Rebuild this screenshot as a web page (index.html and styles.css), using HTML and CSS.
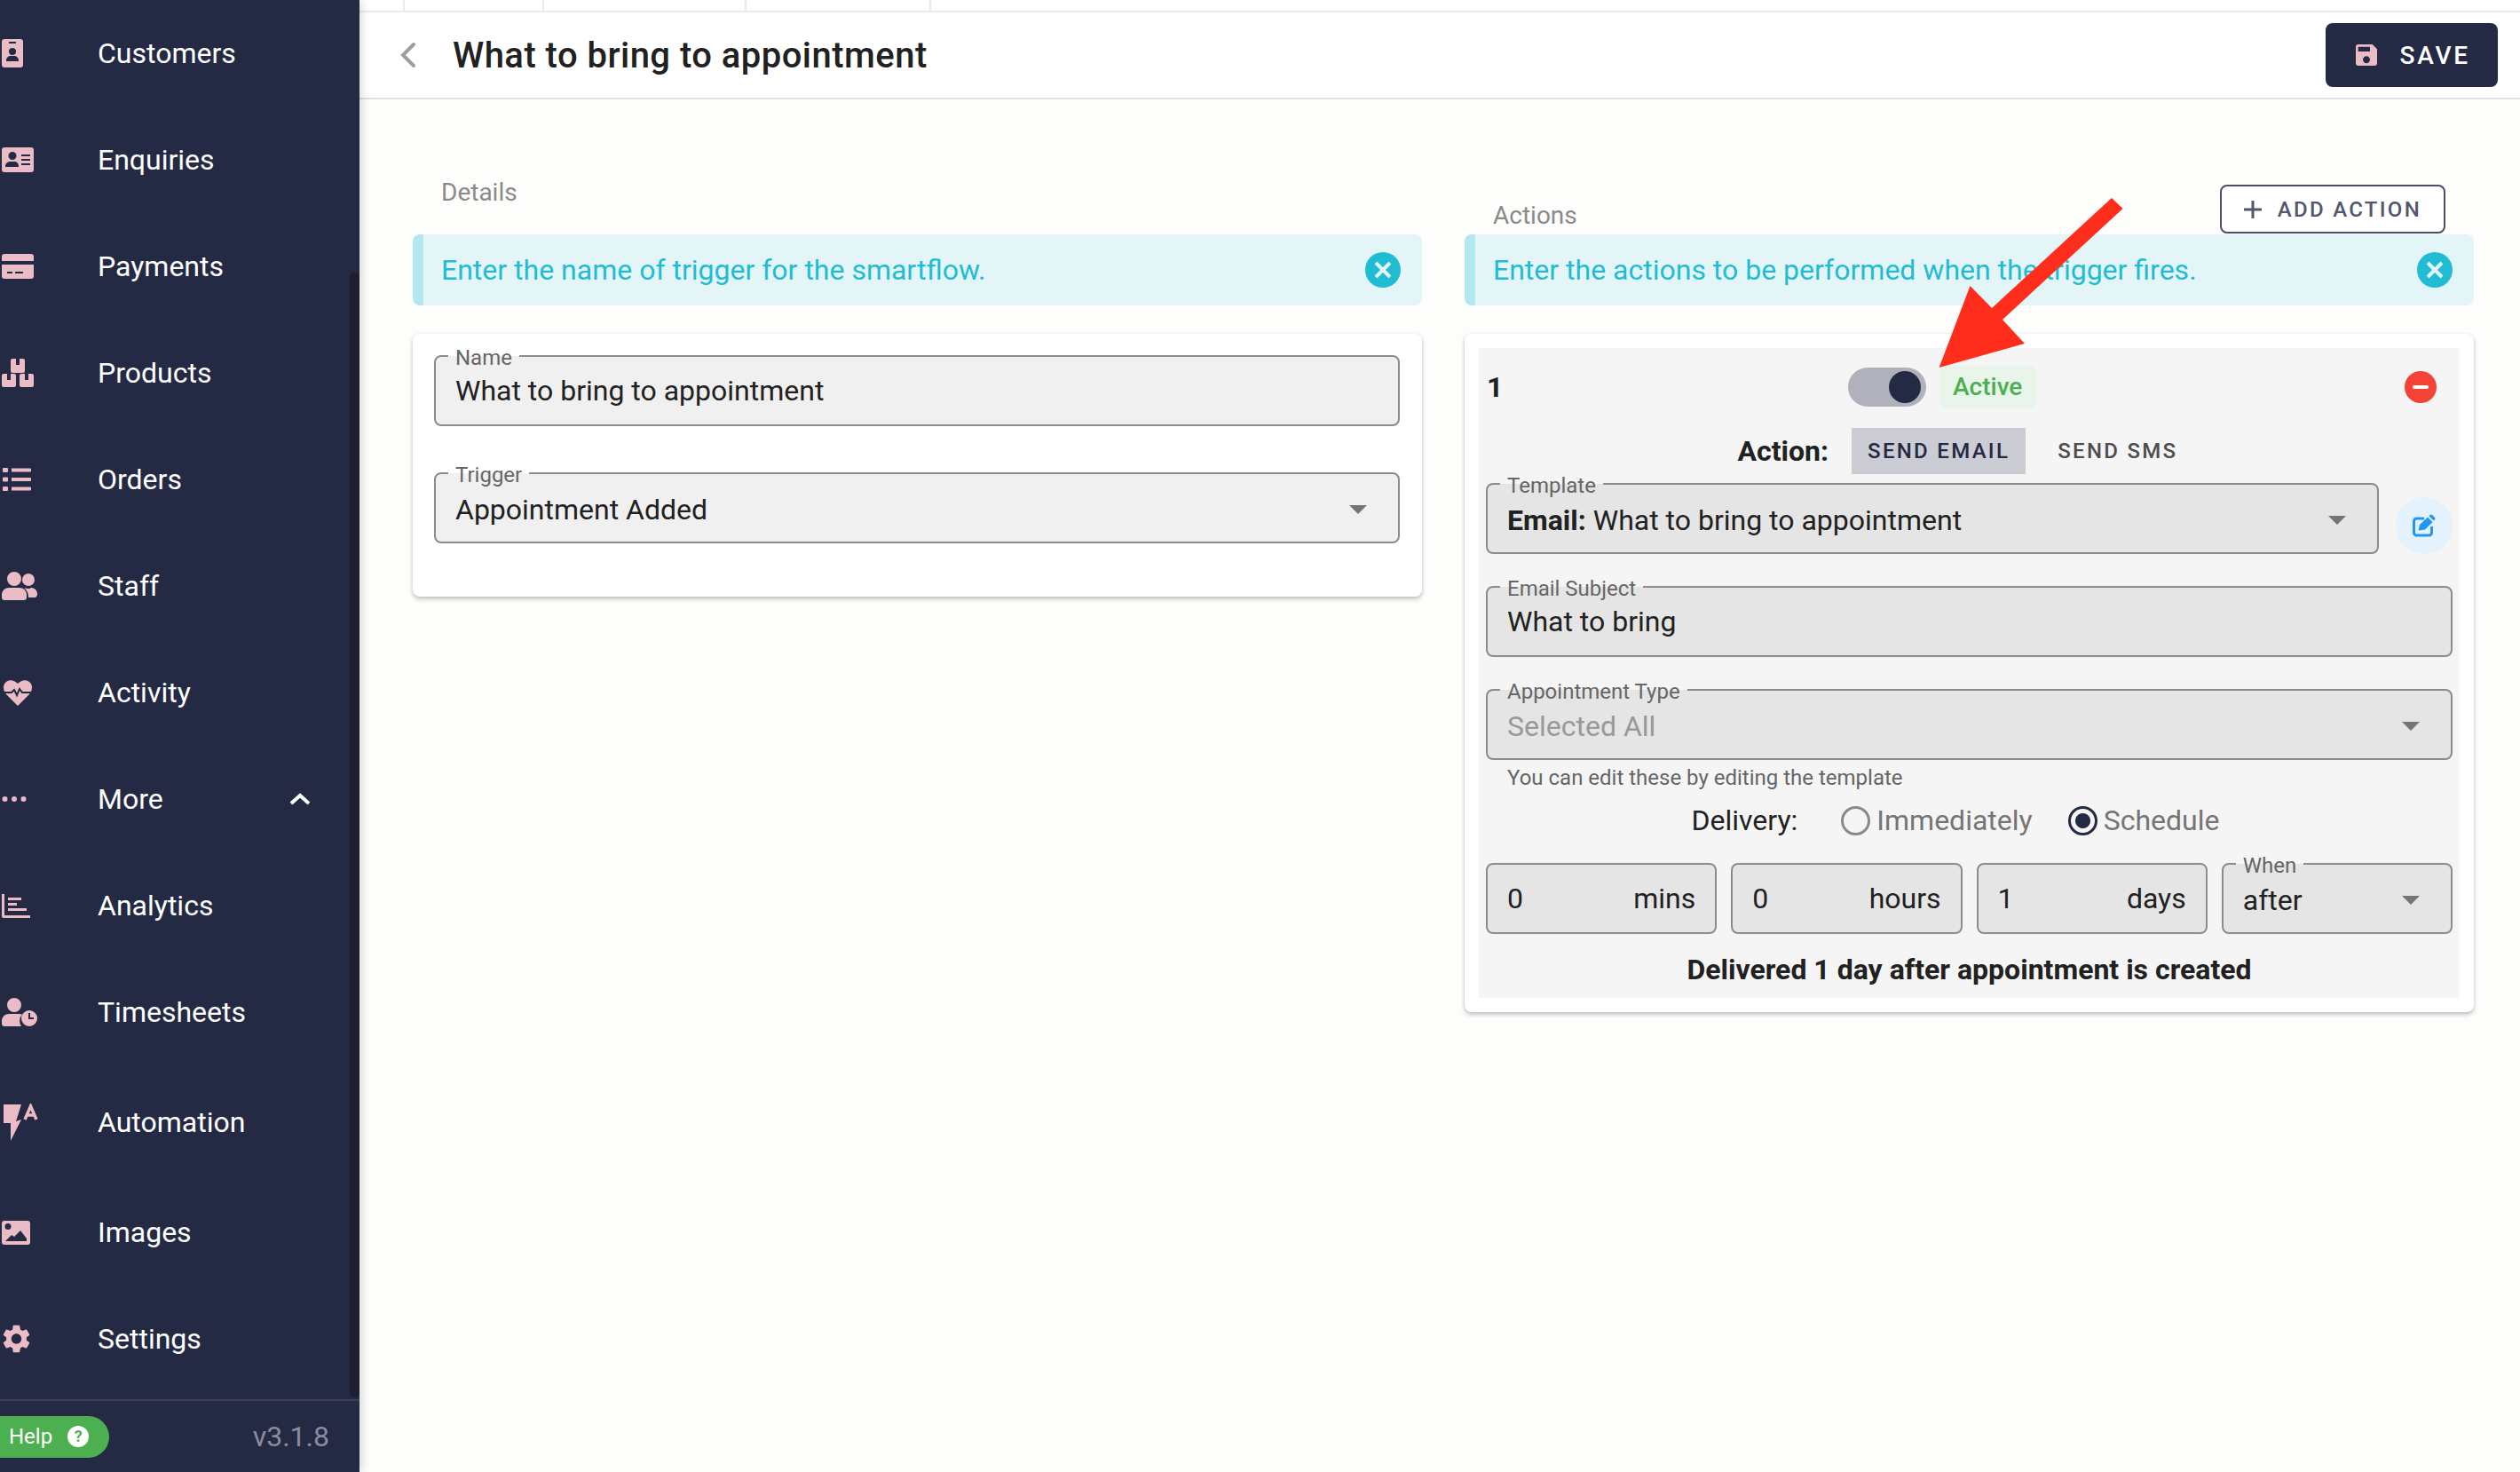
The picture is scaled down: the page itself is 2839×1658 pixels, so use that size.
FILE: index.html
```html
<!DOCTYPE html>
<html lang="en">

<head>
  <meta charset="UTF-8">
  <meta name="viewport" content="width=device-width, initial-scale=1.0">
  <title>What to bring to appointment</title>
  <link rel="stylesheet" href="styles.css">
</head>

<body>
  <aside class="sidebar">
    <nav class="nav">
      <a class="nav-item">
        <span class="nav-icon">
          <svg width="24" height="32" viewBox="0 0 24 32"><path fill-rule="evenodd" d="M3 0h18a3 3 0 0 1 3 3v26a3 3 0 0 1-3 3H3a3 3 0 0 1-3-3V3a3 3 0 0 1 3-3zM8 3v2h8V3zm4 7a4 4 0 1 0 0 8 4 4 0 0 0 0-8zM5 25h14v-1c0-3-2.500-5-5-5h-4c-2.500 0-5 2-5 5z"/></svg>
        </span>
        Customers
      </a>
      <a class="nav-item">
        <span class="nav-icon">
          <svg width="36" height="28" viewBox="0 0 36 28"><path fill-rule="evenodd" d="M3 0h30a3 3 0 0 1 3 3v22a3 3 0 0 1-3 3H3a3 3 0 0 1-3-3V3a3 3 0 0 1 3-3zm9 5a4.500 4.500 0 1 0 0 9 4.500 4.500 0 0 0 0-9zM4 22h15v-1c0-3-2-5-5-5h-4c-3 0-6 2-6 5zM22 8v2h10V8zm0 5v2h10v-2zm0 5v2h10v-2z"/></svg>
        </span>
        Enquiries
      </a>
      <a class="nav-item">
        <span class="nav-icon">
          <svg width="36" height="28" viewBox="0 0 36 28"><path fill-rule="evenodd" d="M3 0h30a3 3 0 0 1 3 3v5H0V3a3 3 0 0 1 3-3zM0 12h36v13a3 3 0 0 1-3 3H3a3 3 0 0 1-3-3zm6 8v2h6v-2zm9 0v2h9v-2z"/></svg>
        </span>
        Payments
      </a>
      <a class="nav-item">
        <span class="nav-icon">
          <svg width="36" height="32" viewBox="0 0 36 32"><path fill-rule="evenodd" d="M12 0h4v7h4V0h4a2 2 0 0 1 2 2v12a2 2 0 0 1-2 2H12a2 2 0 0 1-2-2V2a2 2 0 0 1 2-2zM2 17h4v7h4v-7h4a2 2 0 0 1 2 2v11a2 2 0 0 1-2 2H2a2 2 0 0 1-2-2V19a2 2 0 0 1 2-2zm20 0h4v7h4v-7h4a2 2 0 0 1 2 2v11a2 2 0 0 1-2 2H22a2 2 0 0 1-2-2V19a2 2 0 0 1 2-2z"/></svg>
        </span>
        Products
      </a>
      <a class="nav-item">
        <span class="nav-icon nav-icon-list">
          <svg width="32" height="26" viewBox="0 0 32 26"><path d="M1 0h4a1 1 0 0 1 1 1v3a1 1 0 0 1-1 1H1a1 1 0 0 1-1-1V1a1 1 0 0 1 1-1zm0 10.500h4a1 1 0 0 1 1 1v3a1 1 0 0 1-1 1H1a1 1 0 0 1-1-1v-3a1 1 0 0 1 1-1zM1 21h4a1 1 0 0 1 1 1v3a1 1 0 0 1-1 1H1a1 1 0 0 1-1-1v-3a1 1 0 0 1 1-1zM10 .5h21a1 1 0 0 1 1 1v2a1 1 0 0 1-1 1H10zm0 10.500h21a1 1 0 0 1 1 1v2a1 1 0 0 1-1 1H10zm0 10.500h21a1 1 0 0 1 1 1v2a1 1 0 0 1-1 1H10z"/></svg>
        </span>
        Orders
      </a>
      <a class="nav-item">
        <span class="nav-icon">
          <svg width="40" height="32" viewBox="0 0 40 32"><path d="M14 0a8 8 0 1 1 0 16 8 8 0 0 1 0-16zM8 18h12c5 0 8 4 8 8v3a3 3 0 0 1-3 3H3a3 3 0 0 1-3-3v-3c0-4 3-8 8-8zM30 2a7 7 0 1 1 0 14 7 7 0 0 1 0-14zM25 18c2 .8 3.500 1 5 1 1.500 0 2-.4 3-1 4 0 7 3 7 7 0 2-1 4-3 4h-7c0-5-1.500-8-5-11z"/></svg>
        </span>
        Staff
      </a>
      <a class="nav-item">
        <span class="nav-icon nav-icon-heart">
          <svg width="32" height="29" viewBox="0 0 32 29"><path d="M16 29 3 16C-1 11-1 5 3 2c4-3 9-2 13 2 4-4 9-5 13-2 4 3 4 9 0 14z"/><path class="nav-icon-cut" d="M0 14h9l3-3 3 6 3-7 3 4h11"/></svg>
        </span>
        Activity
      </a>
      <a class="nav-item">
        <span class="nav-icon">
          <svg width="28" height="8" viewBox="0 0 28 8"><circle cx="3.500" cy="4" r="3"/><circle cx="14" cy="4" r="3"/><circle cx="24.500" cy="4" r="3"/></svg>
        </span>
        More
        <svg class="nav-chevron" width="24" height="16" viewBox="0 0 24 16"><path d="M2 13 12 4l10 9"/></svg>
      </a>
      <a class="nav-item">
        <span class="nav-icon">
          <svg width="32" height="27" viewBox="0 0 32 27"><path d="M0 0h3v24h29v3H2a2 2 0 0 1-2-2zM7 4h15v3H7zm0 6h10v3H7zm0 6h21v3H7z"/></svg>
        </span>
        Analytics
      </a>
      <a class="nav-item">
        <span class="nav-icon">
          <svg width="40" height="32" viewBox="0 0 40 32"><path fill-rule="evenodd" d="M14 0a8 8 0 1 1 0 16 8 8 0 0 1 0-16zM8 18h12c1 0 2 .2 3 .5A11 11 0 0 0 22 32H3a3 3 0 0 1-3-3v-3c0-4 3-8 8-8zM31 14a9 9 0 1 1 0 18 9 9 0 0 1 0-18zm-1 3v7h6v-2h-4v-5z"/></svg>
        </span>
        Timesheets
      </a>
      <a class="nav-item nav-item-tall">
        <span class="nav-icon">
          <svg width="42" height="42" viewBox="0 0 42 42"><path d="M2 1h20l-6 19 6-2-12 24V22H2z"/><path class="nav-icon-stroke" d="m26 18 6.500-15L39 18M28.500 13h8"/></svg>
        </span>
        Automation
      </a>
      <a class="nav-item">
        <span class="nav-icon">
          <svg width="32" height="27" viewBox="0 0 32 27"><path fill-rule="evenodd" d="M3 0h26a3 3 0 0 1 3 3v21a3 3 0 0 1-3 3H3a3 3 0 0 1-3-3V3a3 3 0 0 1 3-3zm4 3a3.500 3.500 0 1 0 0 7 3.500 3.500 0 0 0 0-7zM4 23h24v-3l-7-9-7 7-3-2z"/></svg>
        </span>
        Images
      </a>
      <a class="nav-item">
        <span class="nav-icon nav-icon-list">
          <svg width="31" height="32" viewBox="2.200 2 19.600 20"><path d="M19.140 12.940c.04-.3.06-.61.06-.94 0-.32-.02-.64-.07-.94l2.030-1.580c.18-.14.23-.41.12-.61l-1.920-3.320c-.12-.22-.37-.29-.59-.22l-2.390.96c-.5-.38-1.030-.7-1.620-.94l-.36-2.540c-.04-.24-.24-.41-.48-.41h-3.840c-.24 0-.43.17-.47.41l-.36 2.540c-.59.24-1.130.57-1.620.94l-2.390-.96c-.22-.08-.47 0-.59.22L2.740 8.870c-.12.21-.08.47.12.61l2.030 1.580c-.05.3-.09.63-.09.94s.02.64.07.94l-2.030 1.580c-.18.14-.23.41-.12.61l1.920 3.320c.12.22.37.29.59.22l2.390-.96c.5.38 1.030.7 1.620.94l.36 2.540c.05.24.24.41.48.41h3.840c.24 0 .44-.17.47-.41l.36-2.540c.59-.24 1.130-.56 1.620-.94l2.390.96c.22.08.47 0 .59-.22l1.920-3.320c.12-.22.07-.47-.12-.61l-2.010-1.580zM12 15.600c-1.980 0-3.600-1.620-3.600-3.600s1.620-3.600 3.600-3.600 3.600 1.620 3.600 3.600-1.620 3.600-3.600 3.600z"/></svg>
        </span>
        Settings
      </a>
    </nav>
    <div class="sidebar-thumb"></div>
    <footer class="sidebar-footer">
      <span class="help-pill">Help <span class="help-mark">?</span></span>
      <span class="version">v3.1.8</span>
    </footer>
  </aside>

  <main class="main">
    <div class="tabstrip">
      <span class="tab"></span>
      <span class="tab"></span>
      <span class="tab"></span>
      <span class="tab"></span>
    </div>

    <header class="topbar">
      <svg class="back" width="18" height="30" viewBox="0 0 18 30"><path d="M15 3 3 15l12 12"/></svg>
      <h1 class="title">What to bring to appointment</h1>
      <button class="save-btn">
        <svg width="24" height="24" viewBox="3 3 18 18"><path d="M17 3H5c-1.110 0-2 .9-2 2v14c0 1.100.89 2 2 2h14c1.100 0 2-.9 2-2V7l-4-4zm-5 16c-1.660 0-3-1.340-3-3s1.340-3 3-3 3 1.340 3 3-1.340 3-3 3zm3-10H5V5h10v4z"/></svg>
        SAVE
      </button>
    </header>

    <div class="columns">
      <section class="column">
        <div class="column-head column-head-details">
          <span class="section-label">Details</span>
        </div>
        <div class="alert">
          <span>Enter the name of trigger for the smartflow.</span>
          <svg class="alert-close" width="40" height="40" viewBox="0 0 40 40"><circle cx="20" cy="20" r="20"/><path d="m12 12 16 16m0-16L12 28"/></svg>
        </div>
        <div class="card card-details">
          <div class="field field-light">
            <label class="field-label">Name</label>
            <span>What to bring to appointment</span>
          </div>
          <div class="field field-light field-select field-trigger">
            <label class="field-label">Trigger</label>
            <span>Appointment Added</span>
            <i class="caret"></i>
          </div>
        </div>
      </section>

      <section class="column">
        <div class="column-head">
          <span class="section-label">Actions</span>
          <button class="add-btn">
            <svg width="20" height="20" viewBox="0 0 20 20"><path d="M10 0v20M0 10h20"/></svg>
            ADD ACTION
          </button>
        </div>
        <div class="alert">
          <span>Enter the actions to be performed when the trigger fires.</span>
          <svg class="alert-close" width="40" height="40" viewBox="0 0 40 40"><circle cx="20" cy="20" r="20"/><path d="m12 12 16 16m0-16L12 28"/></svg>
        </div>
        <div class="card card-actions">
          <div class="panel">
            <div class="action-top">
              <span class="action-num">1</span>
              <span class="toggle"><i class="toggle-thumb"></i></span>
              <span class="chip">Active</span>
              <svg class="remove" width="36" height="36" viewBox="0 0 36 36"><circle cx="18" cy="18" r="18"/><path d="M11 18h14"/></svg>
            </div>

            <div class="action-type">
              <b class="action-label">Action:</b>
              <button class="type-btn type-btn-on">SEND EMAIL</button>
              <button class="type-btn">SEND SMS</button>
            </div>

            <div class="template-row">
              <div class="field field-select">
                <label class="field-label">Template</label>
                <span><b class="strong">Email:</b> What to bring to appointment</span>
                <i class="caret"></i>
              </div>
              <span class="edit-btn">
                <svg width="26" height="26" viewBox="0 0 26 26"><path class="edit-box" d="M13 5H4.500A3 3 0 0 0 1.500 8v13a3 3 0 0 0 3 3h14a3 3 0 0 0 3-3v-7"/><path d="M6.500 18.500 8 12l9-8.500L22.500 9 14 17.500zM18.500 2.200l1-1a2 2 0 0 1 2.800 0l2.500 2.500a2 2 0 0 1 0 2.800l-1 1z"/></svg>
              </span>
            </div>

            <div class="field field-gap">
              <label class="field-label">Email Subject</label>
              <span>What to bring</span>
            </div>

            <div class="field field-select field-gap">
              <label class="field-label">Appointment Type</label>
              <span class="field-muted">Selected All</span>
              <i class="caret"></i>
            </div>
            <p class="helper">You can edit these by editing the template</p>

            <div class="delivery">
              <span class="delivery-label">Delivery:</span>
              <label class="radio-item"><i class="radio"></i>Immediately</label>
              <label class="radio-item"><i class="radio radio-on"></i>Schedule</label>
            </div>

            <div class="time-grid">
              <div class="field field-time"><span>0</span><span>mins</span></div>
              <div class="field field-time"><span>0</span><span>hours</span></div>
              <div class="field field-time"><span>1</span><span>days</span></div>
              <div class="field field-select">
                <label class="field-label">When</label>
                <span>after</span>
                <i class="caret"></i>
              </div>
            </div>

            <p class="summary">Delivered 1 day after appointment is created</p>
          </div>
        </div>
      </section>
    </div>
  </main>

  <!-- annotation on top of the screenshot -->
  <svg class="arrow" width="210" height="194" viewBox="0 0 210 194"><polygon points="195,1 207.500,13 72,138 97,165 0.600,192 35.500,100 60,125"/></svg>
</body>

</html>
```

FILE: styles.css
```css
* {
  box-sizing: border-box;
}

html,
body {
  height: 100%;
}

body {
  position: relative;
  display: flex;
  margin: 0;
  height: 1658px;
  overflow: hidden;
  font-family: Roboto, sans-serif;
  font-size: 32px;
  color: #212121;
  background-color: #fdfdfb;
}

/* sidebar */

.sidebar {
  position: relative;
  z-index: 2;
  flex: 0 0 405px;
  display: flex;
  flex-direction: column;
  height: 1658px;
  background-color: #252a44;
  box-shadow: 0 0 12px rgba(0, 0, 0, 0.22);
}

.nav {
  height: 1576px;
}

.nav-item {
  display: flex;
  align-items: center;
  height: 120px;
  padding-left: 2px;
  color: #fff;
}

.nav-item-tall {
  height: 128px;
}

.nav-icon {
  flex: 0 0 108px;
  display: flex;
  align-items: center;
  fill: #e9bcc6;
}

.nav-icon-list {
  padding-left: 1px;
}

.nav-icon-heart {
  padding-left: 2px;
}

.nav-icon-cut {
  fill: none;
  stroke: #252a44;
  stroke-width: 2;
}

.nav-icon-stroke {
  fill: none;
  stroke: #e9bcc6;
  stroke-width: 3.500;
}

.nav-chevron {
  margin-left: auto;
  margin-right: 55px;
  fill: none;
  stroke: #fff;
  stroke-width: 4;
}

.sidebar-thumb {
  position: absolute;
  top: 307px;
  right: 0;
  width: 11px;
  height: 1267px;
  border-radius: 6px;
  background-color: #1f1d30;
}

.sidebar-footer {
  display: flex;
  align-items: center;
  justify-content: space-between;
  height: 82px;
  padding-right: 34px;
  border-top: 2px solid #3b3f58;
}

.help-pill {
  display: flex;
  align-items: center;
  width: 123px;
  height: 47px;
  padding-left: 10px;
  border-radius: 0 24px 24px 0;
  font-size: 24px;
  color: #fff;
  background-color: #4caf50;
}

.help-mark {
  width: 24px;
  height: 24px;
  margin-left: 17px;
  border-radius: 50%;
  font-size: 18px;
  font-weight: 700;
  line-height: 24px;
  text-align: center;
  color: #4caf50;
  background-color: #fff;
}

.version {
  color: #8a8d9f;
}

/* main */

.main {
  flex: 1;
  min-width: 0;
}

.tabstrip {
  display: flex;
  height: 14px;
  border-bottom: 2px solid #e9e9ef;
  background-color: #fff;
}

.tab {
  border-right: 2px solid #e9e9ef;
}

.tab:nth-child(1) {
  width: 51px;
}

.tab:nth-child(2) {
  width: 157px;
}

.tab:nth-child(3) {
  width: 228px;
}

.tab:nth-child(4) {
  width: 208px;
}

.topbar {
  display: flex;
  align-items: center;
  height: 98px;
  padding: 0 25px 0 46px;
  border-bottom: 2px solid #e0e0e0;
  background-color: #fff;
}

.back {
  fill: none;
  stroke: #9e9e9e;
  stroke-width: 4;
  stroke-linecap: round;
}

.title {
  margin: 0 0 0 41px;
  font-size: 40px;
  font-weight: 500;
  letter-spacing: 0.46px;
}

.save-btn {
  display: flex;
  align-items: center;
  gap: 26px;
  height: 72px;
  margin-left: auto;
  padding: 0 31px 0 34px;
  border: 0;
  border-radius: 8px;
  font-family: Roboto, sans-serif;
  font-size: 28px;
  font-weight: 500;
  letter-spacing: 2.800px;
  color: #fff;
  background-color: #252a44;
  fill: #e9bcc6;
}

.columns {
  display: grid;
  grid-template-columns: 1137px 1137px;
  gap: 48px;
  padding-left: 60px;
}

.column-head {
  display: flex;
  align-items: flex-end;
  justify-content: space-between;
  height: 152px;
  padding: 0 32px 1px 32px;
}

.section-label {
  margin-bottom: 2px;
  font-size: 28px;
  line-height: 36px;
  color: #8a8a8a;
}

.column-head-details .section-label {
  margin-bottom: 28px;
}

.add-btn {
  display: flex;
  align-items: center;
  gap: 18px;
  height: 55px;
  padding: 0 25px;
  border: 2px solid #4a4e66;
  border-radius: 8px;
  font-family: Roboto, sans-serif;
  font-size: 24px;
  font-weight: 500;
  letter-spacing: 2.300px;
  color: #52566e;
  background-color: #fff;
}

.add-btn svg {
  stroke: #52566e;
  stroke-width: 3;
}

.alert {
  display: flex;
  align-items: center;
  justify-content: space-between;
  height: 80px;
  margin-bottom: 32px;
  padding: 0 24px 0 20px;
  border-left: 12px solid #b2e8ef;
  border-radius: 8px;
  font-weight: 400;
  color: #1fbcd4;
  background-color: #e3f5f7;
}

.alert-close {
  fill: #1fbcd4;
  stroke: #e3f5f7;
  stroke-width: 4;
}

.alert-close circle {
  stroke: none;
}

.card {
  border-radius: 8px;
  background-color: #fff;
  box-shadow: 0 3px 5px rgba(0, 0, 0, 0.22), 0 0 4px rgba(0, 0, 0, 0.06);
}

.card-details {
  padding: 24px 25px 60px 24px;
}

.field-trigger {
  margin-top: 52px;
}

.card-actions {
  padding: 16px;
}

/* outlined inputs */

.field {
  --outer: #f5f5f5;
  --fill: #e5e5e5;
  position: relative;
  display: flex;
  align-items: center;
  flex: 1;
  min-width: 0;
  height: 80px;
  padding: 0 22px;
  border: 2px solid #8c8c8c;
  border-radius: 8px;
  background-color: var(--fill);
}

.field-light {
  --outer: #fff;
  --fill: #f0f0f0;
}

.field-select {
  padding-top: 3px;
}

.field-gap {
  flex: none;
  margin-top: 36px;
}

.field-label {
  position: absolute;
  top: -13px;
  left: 14px;
  padding: 0 8px;
  font-size: 24px;
  line-height: 28px;
  color: #666;
  background: linear-gradient(var(--outer) 12px, var(--fill) 12px);
}

.field-muted {
  color: #999;
}

.field-time {
  justify-content: space-between;
}

.strong {
  font-weight: 700;
}

.caret {
  width: 0;
  height: 0;
  margin-left: auto;
  margin-right: 13px;
  border-top: 10px solid #757575;
  border-left: 10px solid transparent;
  border-right: 10px solid transparent;
}

/* action panel */

.panel {
  padding: 20px 8px 12px;
  background-color: #f5f5f5;
}

.action-top {
  display: flex;
  align-items: center;
  height: 48px;
}

.action-num {
  width: 408px;
  padding-left: 1px;
  font-weight: 700;
}

.toggle {
  display: flex;
  align-items: center;
  justify-content: flex-end;
  width: 88px;
  height: 44px;
  padding-right: 6px;
  border-radius: 22px;
  background-color: #b0b1bb;
}

.toggle-thumb {
  width: 36px;
  height: 36px;
  border-radius: 50%;
  background-color: #252a44;
}

.chip {
  margin-left: 15px;
  padding: 0 17px 0 15px;
  border-radius: 8px;
  font-size: 28px;
  font-weight: 500;
  line-height: 48px;
  color: #4caf50;
  background-color: #e9f4ea;
}

.remove {
  margin-left: auto;
  margin-right: 18px;
  fill: #f44336;
  stroke: #fff;
  stroke-width: 4;
  stroke-linecap: round;
}

.remove circle {
  stroke: none;
}

.action-type {
  display: flex;
  align-items: center;
  justify-content: center;
  height: 52px;
  margin-top: 22px;
  padding-right: 8px;
}

.action-label {
  margin-right: 26px;
  font-weight: 700;
}

.type-btn {
  height: 52px;
  padding: 0 18px;
  border: 0;
  font-family: Roboto, sans-serif;
  font-size: 24px;
  font-weight: 500;
  letter-spacing: 2.300px;
  color: #4d4d4d;
  background-color: transparent;
}

.type-btn + .type-btn {
  margin-left: 18px;
}

.type-btn-on {
  color: #252a44;
  background-color: #cbccd4;
}

.template-row {
  display: flex;
  align-items: center;
  margin-top: 10px;
}

.edit-btn {
  display: flex;
  align-items: center;
  justify-content: center;
  flex: 0 0 64px;
  height: 64px;
  margin: 16px 0 0 19px;
  border-radius: 50%;
  background-color: #e3f2fd;
}

.edit-btn svg {
  fill: #2196f3;
}

.edit-box {
  fill: none;
  stroke: #2196f3;
  stroke-width: 3;
}

.helper {
  margin: 6px 0 0;
  padding-left: 24px;
  font-size: 24px;
  line-height: 28px;
  color: #666;
}

.delivery {
  display: flex;
  align-items: center;
  justify-content: center;
  height: 48px;
  margin-top: 10px;
  padding-right: 31px;
}

.delivery-label {
  margin-right: 49px;
}

.radio-item {
  display: flex;
  align-items: center;
  gap: 7px;
  color: #757575;
}

.radio-item + .radio-item {
  margin-left: 40px;
}

.radio {
  width: 33px;
  height: 33px;
  border: 3px solid #8a8a8a;
  border-radius: 50%;
}

.radio-on {
  border-color: #252a44;
  background: radial-gradient(circle, #252a44 0 8px, transparent 9px);
}

.time-grid {
  display: grid;
  grid-template-columns: repeat(4, 1fr);
  gap: 16px;
  margin-top: 24px;
}

.summary {
  margin: 20px 0 0;
  font-weight: 700;
  line-height: 40px;
  text-align: center;
}

.arrow {
  position: absolute;
  top: 222px;
  left: 2184px;
  z-index: 3;
  fill: #ff2d1c;
}
```
